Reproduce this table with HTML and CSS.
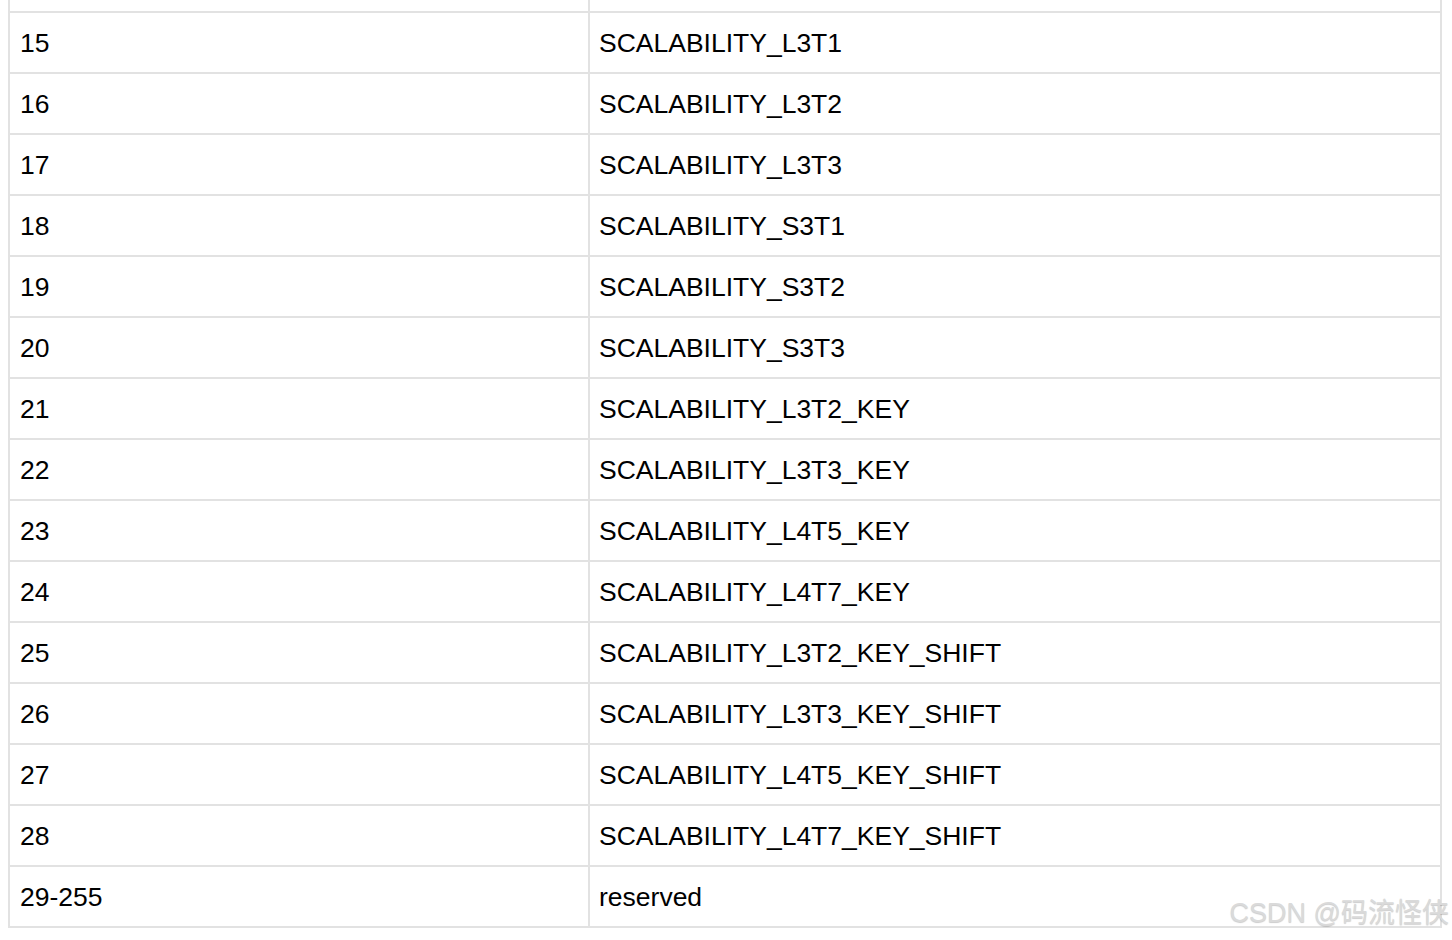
FILE: index.html
```html
<!DOCTYPE html>
<html>
<head>
<meta charset="utf-8">
<link rel="stylesheet" href="styles.css">
</head>
<body>
<div class="sheet">
<table class="grid">
<colgroup><col class="c1"><col class="c2"></colgroup>
<tbody>
<tr class="partial"><td></td><td></td></tr>
<tr><td>15</td><td>SCALABILITY_L3T1</td></tr>
<tr><td>16</td><td>SCALABILITY_L3T2</td></tr>
<tr><td>17</td><td>SCALABILITY_L3T3</td></tr>
<tr><td>18</td><td>SCALABILITY_S3T1</td></tr>
<tr><td>19</td><td>SCALABILITY_S3T2</td></tr>
<tr><td>20</td><td>SCALABILITY_S3T3</td></tr>
<tr><td>21</td><td>SCALABILITY_L3T2_KEY</td></tr>
<tr><td>22</td><td>SCALABILITY_L3T3_KEY</td></tr>
<tr><td>23</td><td>SCALABILITY_L4T5_KEY</td></tr>
<tr><td>24</td><td>SCALABILITY_L4T7_KEY</td></tr>
<tr><td>25</td><td>SCALABILITY_L3T2_KEY_SHIFT</td></tr>
<tr><td>26</td><td>SCALABILITY_L3T3_KEY_SHIFT</td></tr>
<tr><td>27</td><td>SCALABILITY_L4T5_KEY_SHIFT</td></tr>
<tr><td>28</td><td>SCALABILITY_L4T7_KEY_SHIFT</td></tr>
<tr><td>29-255</td><td>reserved</td></tr>
</tbody>
</table>
<div class="watermark">CSDN @码流怪侠</div>
</div>
</body>
</html>
```
FILE: styles.css
```css
html, body {
  margin: 0;
  padding: 0;
  background: #ffffff;
}
.sheet {
  position: relative;
  width: 1452px;
  height: 940px;
  padding: 0 10px 0 8px;
  box-sizing: border-box;
  overflow: hidden;
}
.grid {
  table-layout: fixed;
  width: 1434px;
  border-collapse: separate;
  border-spacing: 0;
  border-left: 2px solid #e2e2e2;
  font-family: "Liberation Sans", Arial, sans-serif;
  font-size: 26.5px;
  color: #000;
}
.c1 { width: 580px; }
.c2 { width: 852px; }
.grid td {
  height: 59px;
  padding: 0 0 0 9px;
  border-right: 2px solid #e2e2e2;
  border-bottom: 2px solid #e2e2e2;
  vertical-align: middle;
  line-height: 30px;
  white-space: nowrap;
}
.grid td:first-child {
  padding-left: 10px;
}
.grid .partial td {
  height: 11px;
  padding: 0;
  line-height: 0;
}
.watermark {
  position: absolute;
  right: 3px;
  top: 896px;
  font-family: "Liberation Sans", "Noto Sans CJK SC", sans-serif;
  font-size: 27px;
  line-height: 34px;
  color: #dadada;
  text-shadow: 0 1px 1px rgba(0,0,0,0.2);
  white-space: nowrap;
}
```
